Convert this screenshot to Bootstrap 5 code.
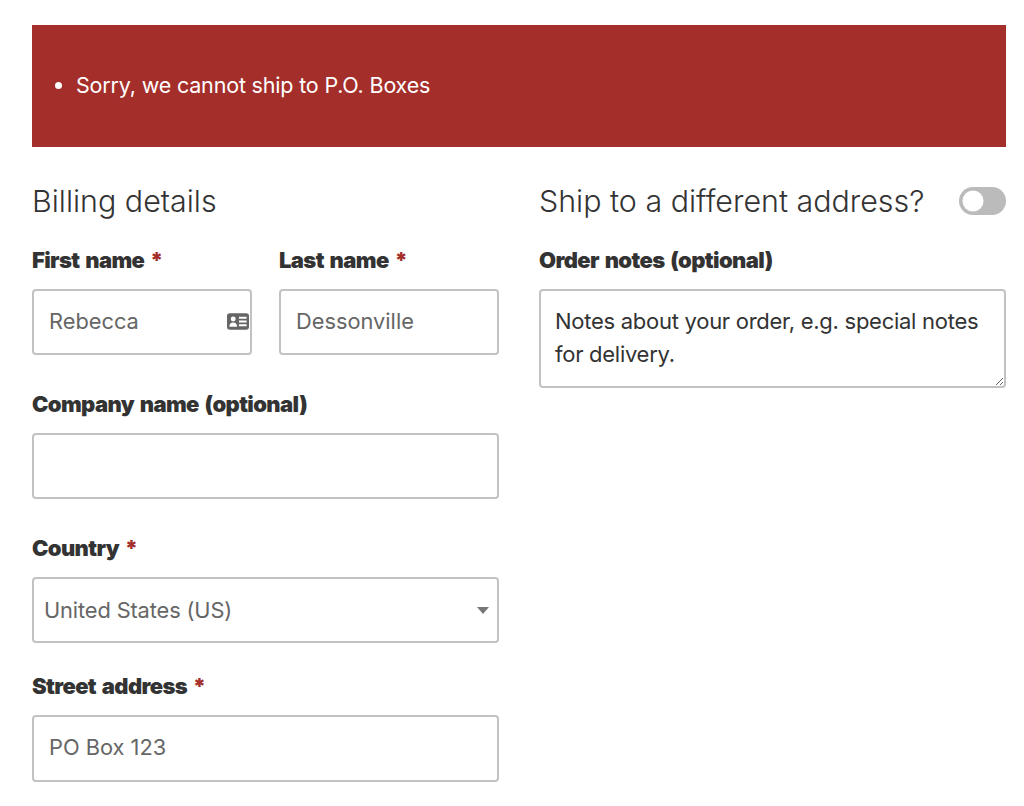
<!DOCTYPE html>
<html lang="en">
<head>
<meta charset="utf-8">
<title>Checkout</title>
<link href="https://cdn.jsdelivr.net/npm/bootstrap@5.3.0/dist/css/bootstrap.min.css" rel="stylesheet">
<style>
body{font-family:Inter,"Liberation Sans",sans-serif;color:#333;background:#fff;font-size:22px;overflow:hidden}
.page-wrap{padding:25px 18px 0 32px}
.notice{background:#a42e2a;color:#fff;height:122px;border:0;border-radius:0;margin:0 0 34px;padding:0 0 2px 44px;display:flex;align-items:center;font-size:21.5px;letter-spacing:-.18px}
.notice ul{margin:0;padding:0}
.col-gap{gap:40px}
.side{width:467px;flex:none}
.sec-title{font-size:30.4px;font-weight:300;line-height:40px;margin:0;color:#333}
.head-line{height:40px;margin-bottom:29px}
.fld{margin-bottom:39px}
.fld-last{margin-bottom:33px}
.fld-label{font-weight:900;font-size:22px;line-height:20px;margin:0 0 19px;display:block;color:#333;letter-spacing:-.62px;word-spacing:2px}
.req{color:#a42e2a}
.fld-input.form-control,.fld-input.form-select{height:66px;border:2px solid #c2c2c2;border-radius:4px;font-size:21.8px;color:#666;padding:0 15px 2px;box-shadow:none;background-color:#fff}
.fld-input.form-select{padding:0 10px;background-image:none;letter-spacing:-.12px}
.fld-input.note{height:99px;color:#333;line-height:33px;padding:14px 14px;resize:vertical;letter-spacing:-.27px;font-size:22px}
.fld-input.form-control.tall{height:67px;padding-bottom:4px}
.name-gap{gap:27px}
.name-cell{flex:1 1 0;min-width:0}
.card-ic{position:absolute;right:3px;top:24px;width:22px;height:17px}
.caret-ic{position:absolute;right:10px;top:30px;width:0;height:0;border-left:6px solid transparent;border-right:6px solid transparent;border-top:7px solid #777;pointer-events:none}
.toggle.form-check-input{width:47px;height:28px;margin:0;float:none;border:0;background-color:#bbb;box-shadow:none;background-image:url("data:image/svg+xml,%3csvg xmlns='http://www.w3.org/2000/svg' viewBox='-4 -4 8 8'%3e%3ccircle r='3' fill='%23fff'/%3e%3c/svg%3e")}
.form-switch .toggle.form-check-input{margin-left:0;width:47px}
.toggle-box{padding:0;min-height:0;margin:0;display:flex}
</style>
</head>
<body>
<div class="page-wrap">
  <div class="alert notice" role="alert"><ul><li>Sorry, we cannot ship to P.O. Boxes</li></ul></div>
  <div class="d-flex col-gap">
    <div class="side">
      <div class="head-line"><h3 class="sec-title">Billing details</h3></div>
      <div class="d-flex name-gap fld">
        <div class="name-cell">
          <label class="fld-label" for="fn">First name <span class="req">*</span></label>
          <div class="position-relative">
            <input id="fn" class="form-control fld-input" value="Rebecca">
            <svg class="card-ic" viewBox="0 0 23 17" aria-hidden="true"><rect width="23" height="17" rx="3" fill="#666"/><circle cx="6.5" cy="6" r="2.6" fill="#fff"/><path d="M2.5 14c0-3 1.6-4.4 4-4.4s4 1.4 4 4.4z" fill="#fff"/><path d="M12.5 3.5h8v2h-8zM12.5 7.5h8v2h-8zM12.5 11.5h8v2h-8z" fill="#fff"/></svg>
          </div>
        </div>
        <div class="name-cell">
          <label class="fld-label" for="ln">Last name <span class="req">*</span></label>
          <input id="ln" class="form-control fld-input" value="Dessonville">
        </div>
      </div>
      <div class="fld">
        <label class="fld-label" for="co">Company name (optional)</label>
        <input id="co" class="form-control fld-input">
      </div>
      <div class="fld fld-last">
        <label class="fld-label" for="cy">Country <span class="req">*</span></label>
        <div class="position-relative">
          <select id="cy" class="form-select fld-input"><option>United States (US)</option></select>
          <span class="caret-ic"></span>
        </div>
      </div>
      <div class="fld">
        <label class="fld-label" for="st">Street address <span class="req">*</span></label>
        <input id="st" class="form-control fld-input tall" value="PO Box 123">
      </div>
    </div>
    <div class="side">
      <div class="head-line d-flex justify-content-between align-items-center">
        <h3 class="sec-title">Ship to a different address?</h3>
        <div class="form-check form-switch toggle-box"><input class="form-check-input toggle" type="checkbox" role="switch" aria-label="Ship to a different address"></div>
      </div>
      <label class="fld-label" for="nt">Order notes (optional)</label>
      <textarea id="nt" class="form-control fld-input note">Notes about your order, e.g. special notes for delivery.</textarea>
    </div>
  </div>
</div>
<script src="https://cdn.jsdelivr.net/npm/bootstrap@5.3.0/dist/js/bootstrap.bundle.min.js"></script>
</body>
</html>
